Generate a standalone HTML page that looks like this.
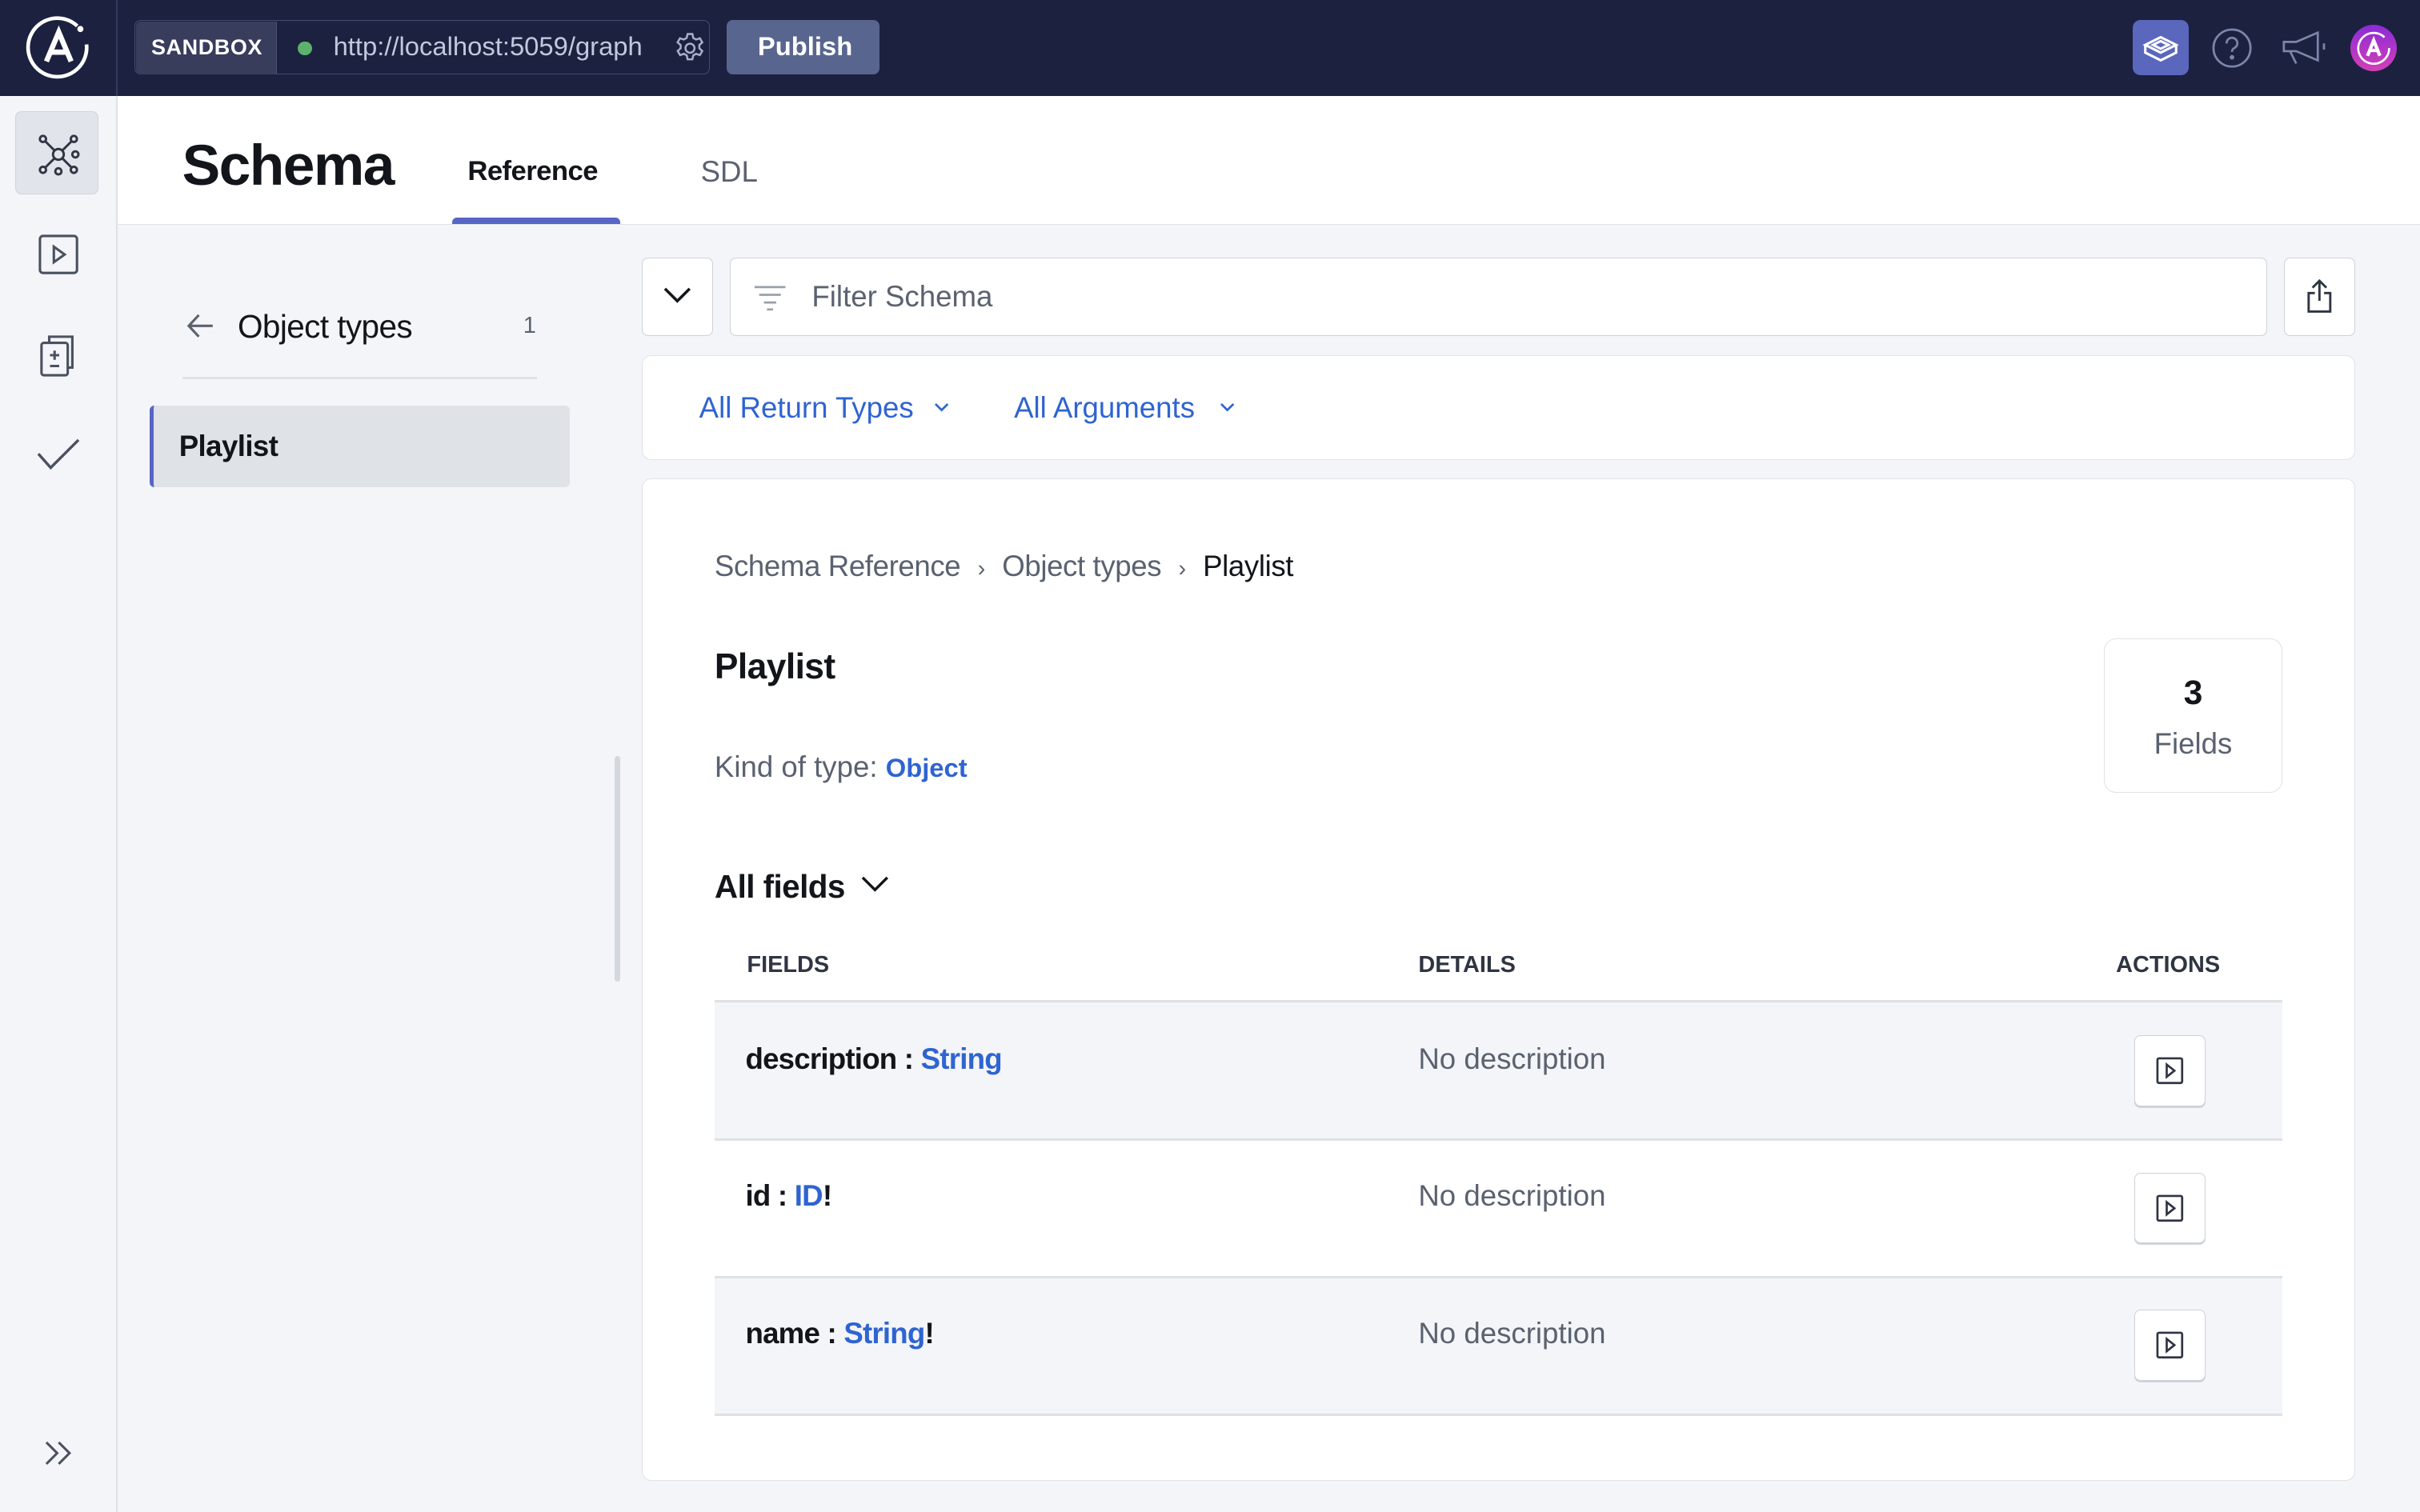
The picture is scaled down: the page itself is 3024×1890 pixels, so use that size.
<!DOCTYPE html>
<html><head><meta charset="utf-8"><style>
html,body{margin:0;padding:0;width:3024px;height:1890px;overflow:hidden;background:#f4f5f8}
#r{zoom:1.92857;width:1568px;height:980px;position:relative;font-family:"Liberation Sans",sans-serif;color:#12151a}
.a{position:absolute}
.t{position:absolute;white-space:nowrap;line-height:1}
svg{position:absolute;overflow:visible}
</style></head><body><div id="r">
<div class="a" style="left:0;top:0;width:1568px;height:62px;background:#1c2140"></div>
<div class="a" style="left:75px;top:0;width:1px;height:62px;background:#343a5c"></div>
<svg style="left:16px;top:9px" width="44" height="44" viewBox="0 0 44 44"><path d="M34 8 A19 19 0 1 0 40 20" fill="none" stroke="#fff" stroke-width="2.4"/><circle cx="36" cy="10" r="2" fill="#fff"/><path d="M14 31 L22 12 L30 31 M17 25 H27" fill="none" stroke="#fff" stroke-width="3.4"/></svg>
<div class="a" style="left:87px;top:13px;width:372px;height:34px;border:1px solid #434a72;border-radius:4px;background:#1c2140"></div>
<div class="a" style="left:88px;top:14px;width:91px;height:34px;background:#383d5c;border-right:1px solid #4a5177;border-radius:3px 0 0 3px"></div>
<div class="t" style="left:98px;top:24px;font-size:14px;font-weight:bold;letter-spacing:0.3px;color:#fff">SANDBOX</div>
<div class="a" style="left:193px;top:27px;width:9px;height:9px;border-radius:50%;background:#5cb26a"></div>
<div class="t" style="left:216px;top:22px;font-size:17px;color:#c2c8dc">http://localhost:5059/graph</div>
<svg style="left:436px;top:20px" width="22" height="22" viewBox="0 0 24 24" fill="none" stroke="#a7b0cc" stroke-width="1.4"><circle cx="12" cy="12" r="3.2"/><path d="M10.3 2h3.4l.6 2.8 2 1.1 2.7-.9 1.7 2.9-2.1 1.9v2.3l2.1 1.9-1.7 2.9-2.7-.9-2 1.1-.6 2.8h-3.4l-.6-2.8-2-1.1-2.7.9-1.7-2.9 2.1-1.9V9.8L3.2 7.9l1.7-2.9 2.7.9 2-1.1z"/></svg>
<div class="a" style="left:471px;top:13px;width:99px;height:35px;background:#58668f;border-radius:4px"></div>
<div class="t" style="left:491px;top:22px;font-size:17px;font-weight:bold;color:#fff">Publish</div>
<div class="a" style="left:1382px;top:13px;width:36px;height:36px;background:#5a67bd;border-radius:5px"></div>
<svg style="left:1386px;top:17px" width="28" height="28" viewBox="0 0 28 28" fill="none" stroke="#fff" stroke-width="1.6"><path d="M14 7 L24 12 L14 17 L4 12 Z M4 12 V17 L14 22 L24 17 V12 M9 12 L14 9.5 L19 12 L14 14.5 Z"/></svg>
<svg style="left:1433px;top:18px" width="26" height="26" viewBox="0 0 26 26" fill="none" stroke="#7c86a8" stroke-width="1.4"><circle cx="13" cy="13" r="12"/><path d="M9.5 10a3.5 3.5 0 1 1 5 3c-1.2.6-1.5 1.3-1.5 2.5"/><circle cx="13" cy="19" r=".8" fill="#7c86a8"/></svg>
<svg style="left:1478px;top:18px" width="30" height="26" viewBox="0 0 30 26" fill="none" stroke="#7c86a8" stroke-width="1.4"><path d="M2 9 H10 L24 3 V21 L10 15 H2 Z M6 15 L10 23 M28 10 V14"/></svg>
<div class="a" style="left:1523px;top:16px;width:30px;height:30px;border-radius:50%;background:linear-gradient(#8b2bd8,#d33fb6)"></div>
<svg style="left:1526px;top:19px" width="24" height="24" viewBox="0 0 24 24" fill="none" stroke="#fff" stroke-width="1.4"><path d="M19 5 A10 10 0 1 0 22 12"/><path d="M8 17 L12 7 L16 17 M9.5 13.5 H14.5" stroke-width="2.2"/></svg>
<div class="a" style="left:75px;top:62px;width:1px;height:918px;background:#dee2e7"></div>
<div class="a" style="left:10px;top:72px;width:54px;height:54px;background:#e1e4ea;border:1px solid #cfd4db;border-radius:4px;box-sizing:border-box"></div>
<svg style="left:24px;top:86px" width="28" height="28" viewBox="0 0 28 28" fill="none" stroke="#2f3542" stroke-width="1.5"><circle cx="14" cy="14" r="3.5"/><circle cx="4" cy="4" r="2"/><circle cx="24" cy="4" r="2"/><circle cx="4" cy="24" r="2"/><circle cx="24" cy="24" r="2"/><circle cx="14" cy="25" r="2"/><circle cx="25" cy="14" r="2"/><path d="M5.5 5.5 L11.5 11.5 M22.5 5.5 L16.5 11.5 M5.5 22.5 L11.5 16.5 M22.5 22.5 L16.5 16.5"/></svg>
<svg style="left:25px;top:152px" width="26" height="26" viewBox="0 0 26 26" fill="none" stroke="#4a5160" stroke-width="1.6"><rect x="1" y="1" width="24" height="24" rx="2"/><path d="M10 8 L17 13 L10 18 Z"/></svg>
<svg style="left:25px;top:216px" width="26" height="28" viewBox="0 0 26 28" fill="none" stroke="#4a5160" stroke-width="1.6"><rect x="2" y="6" width="17" height="21" rx="1.5"/><path d="M7 6 V2 H22 V22 H19"/><path d="M10.5 11 V17 M7.5 14 H13.5 M7.5 21 H13.5"/></svg>
<svg style="left:24px;top:284px" width="28" height="22" viewBox="0 0 28 22" fill="none" stroke="#4a5160" stroke-width="1.8"><path d="M1 10 L9 19 L27 1"/></svg>
<svg style="left:29px;top:934px" width="18" height="16" viewBox="0 0 18 16" fill="none" stroke="#4a5160" stroke-width="1.6"><path d="M1 1 L8 8 L1 15 M9 1 L16 8 L9 15"/></svg>
<div class="a" style="left:76px;top:62px;width:1492px;height:83px;background:#fff;border-bottom:1px solid #dee2e7"></div>
<div class="t" style="left:118px;top:89px;font-size:37px;font-weight:bold;letter-spacing:-0.8px;color:#12151a">Schema</div>
<div class="t" style="left:303px;top:102px;font-size:18px;font-weight:bold;letter-spacing:-0.3px;color:#12151a">Reference</div>
<div class="a" style="left:293px;top:141px;width:109px;height:4px;background:#5765c4;border-radius:3px 3px 0 0"></div>
<div class="t" style="left:454px;top:102px;font-size:19px;color:#5a6270">SDL</div>
<svg style="left:121px;top:202px" width="18" height="18" viewBox="0 0 18 18" fill="none" stroke="#5a6270" stroke-width="1.6"><path d="M17 9 H2 M8 2 L1.5 9 L8 16"/></svg>
<div class="t" style="left:154px;top:201px;font-size:21px;letter-spacing:-0.3px;color:#12151a">Object types</div>
<div class="t" style="left:339px;top:204px;font-size:15px;color:#5a6270">1</div>
<div class="a" style="left:118px;top:244px;width:230px;height:2px;background:#dee2e7"></div>
<div class="a" style="left:97px;top:263px;width:272px;height:53px;background:#dfe2e7;border-left:3px solid #5765c4;border-radius:3px;box-sizing:border-box"></div>
<div class="t" style="left:116px;top:280px;font-size:19px;font-weight:bold;letter-spacing:-0.3px;color:#12151a">Playlist</div>
<div class="a" style="left:398px;top:490px;width:4px;height:146px;background:#d3d8de;border-radius:2px"></div>
<div class="a" style="left:416px;top:167px;width:46px;height:51px;background:#fff;border:1px solid #cdd2d9;border-radius:4px;box-sizing:border-box"></div>
<svg style="left:430px;top:185px" width="18" height="12" viewBox="0 0 18 12" fill="none" stroke="#12151a" stroke-width="1.8"><path d="M1 2 L9 10 L17 2"/></svg>
<div class="a" style="left:473px;top:167px;width:996px;height:51px;background:#fff;border:1px solid #cdd2d9;border-radius:4px;box-sizing:border-box"></div>
<svg style="left:488px;top:184px" width="22" height="18" viewBox="0 0 22 18" fill="none" stroke="#9aa1ad" stroke-width="1.4"><path d="M1 2 H21 M4 7 H18 M7 12 H15 M9 16.5 H13"/></svg>
<div class="t" style="left:526px;top:183px;font-size:19px;color:#5a6270">Filter Schema</div>
<div class="a" style="left:1480px;top:167px;width:46px;height:51px;background:#fff;border:1px solid #cdd2d9;border-radius:4px;box-sizing:border-box"></div>
<svg style="left:1494px;top:181px" width="18" height="22" viewBox="0 0 18 22" fill="none" stroke="#2f3542" stroke-width="1.5"><path d="M9 14 V1 M4.5 5.5 L9 1 L13.5 5.5 M6 9 H2 V21 H16 V9 H12"/></svg>
<div class="a" style="left:416px;top:230px;width:1110px;height:68px;background:#fff;border:1px solid #dee2e7;border-radius:6px;box-sizing:border-box"></div>
<div class="t" style="left:453px;top:255px;font-size:19px;color:#2f64d1">All Return Types</div>
<svg style="left:605px;top:261px" width="10" height="7" viewBox="0 0 10 7" fill="none" stroke="#2f64d1" stroke-width="1.4"><path d="M1 1 L5 5 L9 1"/></svg>
<div class="t" style="left:657px;top:255px;font-size:19px;color:#2f64d1">All Arguments</div>
<svg style="left:790px;top:261px" width="10" height="7" viewBox="0 0 10 7" fill="none" stroke="#2f64d1" stroke-width="1.4"><path d="M1 1 L5 5 L9 1"/></svg>
<div class="a" style="left:416px;top:310px;width:1110px;height:650px;background:#fff;border:1px solid #dee2e7;border-radius:6px;box-sizing:border-box"></div>
<div class="t" style="left:463px;top:358px;font-size:19px;letter-spacing:-0.2px;color:#5a6270">Schema Reference <span style="margin:0 6px;font-size:15px">›</span> Object types <span style="margin:0 6px;font-size:15px">›</span> <span style="color:#12151a">Playlist</span></div>
<div class="t" style="left:463px;top:421px;font-size:23px;font-weight:bold;letter-spacing:-0.3px;color:#12151a">Playlist</div>
<div class="t" style="left:463px;top:488px;font-size:19px;color:#5a6270">Kind of type: <span style="color:#2f64d1;font-weight:bold;font-size:17px">Object</span></div>
<div class="a" style="left:1363px;top:414px;width:116px;height:100px;border:1px solid #dee2e7;border-radius:8px;box-sizing:border-box"></div>
<div class="t" style="left:1363px;top:438px;width:116px;text-align:center;font-size:22px;font-weight:bold">3</div>
<div class="t" style="left:1363px;top:473px;width:116px;text-align:center;font-size:19px;color:#5a6270">Fields</div>
<div class="t" style="left:463px;top:564px;font-size:21px;font-weight:bold;letter-spacing:-0.3px">All fields</div>
<svg style="left:558px;top:568px" width="18" height="11" viewBox="0 0 18 11" fill="none" stroke="#12151a" stroke-width="1.8"><path d="M1 1 L9 9 L17 1"/></svg>
<div class="t" style="left:484px;top:618px;font-size:15px;font-weight:bold;color:#2f3542">FIELDS</div>
<div class="t" style="left:919px;top:618px;font-size:15px;font-weight:bold;color:#2f3542">DETAILS</div>
<div class="t" style="left:1371px;top:618px;font-size:15px;font-weight:bold;color:#2f3542">ACTIONS</div>
<div class="a" style="left:463px;top:648px;width:1016px;height:91px;background:#f4f5f8;border-top:2px solid #dee2e7;box-sizing:border-box"></div>
<div class="a" style="left:463px;top:738px;width:1016px;height:90px;background:#fff;border-top:2px solid #dee2e7;box-sizing:border-box"></div>
<div class="a" style="left:463px;top:827px;width:1016px;height:91px;background:#f4f5f8;border-top:2px solid #dee2e7;border-bottom:2px solid #dee2e7;box-sizing:border-box"></div>
<div class="t" style="left:483px;top:677px;font-size:19px;font-weight:bold;letter-spacing:-0.4px">description : <span style="color:#2f64d1">String</span></div>
<div class="t" style="left:483px;top:766px;font-size:19px;font-weight:bold;letter-spacing:-0.4px">id : <span style="color:#2f64d1">ID</span>!</div>
<div class="t" style="left:483px;top:855px;font-size:19px;font-weight:bold;letter-spacing:-0.4px">name : <span style="color:#2f64d1">String</span>!</div>
<div class="t" style="left:919px;top:677px;font-size:19px;color:#5a6270">No description</div>
<div class="t" style="left:919px;top:766px;font-size:19px;color:#5a6270">No description</div>
<div class="t" style="left:919px;top:855px;font-size:19px;color:#5a6270">No description</div>
<div class="a" style="left:1383px;top:671px;width:46px;height:46px;background:#fff;border:1px solid #cdd2d9;border-radius:4px;box-sizing:border-box;box-shadow:0 1px 0 #cdd2d9"></div>
<div class="a" style="left:1383px;top:760px;width:46px;height:46px;background:#fff;border:1px solid #cdd2d9;border-radius:4px;box-sizing:border-box;box-shadow:0 1px 0 #cdd2d9"></div>
<div class="a" style="left:1383px;top:849px;width:46px;height:46px;background:#fff;border:1px solid #cdd2d9;border-radius:4px;box-sizing:border-box;box-shadow:0 1px 0 #cdd2d9"></div>
<svg style="left:1397px;top:685px" width="18" height="18" viewBox="0 0 18 18" fill="none" stroke="#2f3542" stroke-width="1.4"><rect x="1" y="1" width="16" height="16" rx="1"/><path d="M7 5 L12 9 L7 13 Z"/></svg>
<svg style="left:1397px;top:774px" width="18" height="18" viewBox="0 0 18 18" fill="none" stroke="#2f3542" stroke-width="1.4"><rect x="1" y="1" width="16" height="16" rx="1"/><path d="M7 5 L12 9 L7 13 Z"/></svg>
<svg style="left:1397px;top:863px" width="18" height="18" viewBox="0 0 18 18" fill="none" stroke="#2f3542" stroke-width="1.4"><rect x="1" y="1" width="16" height="16" rx="1"/><path d="M7 5 L12 9 L7 13 Z"/></svg>
</div></body></html>
